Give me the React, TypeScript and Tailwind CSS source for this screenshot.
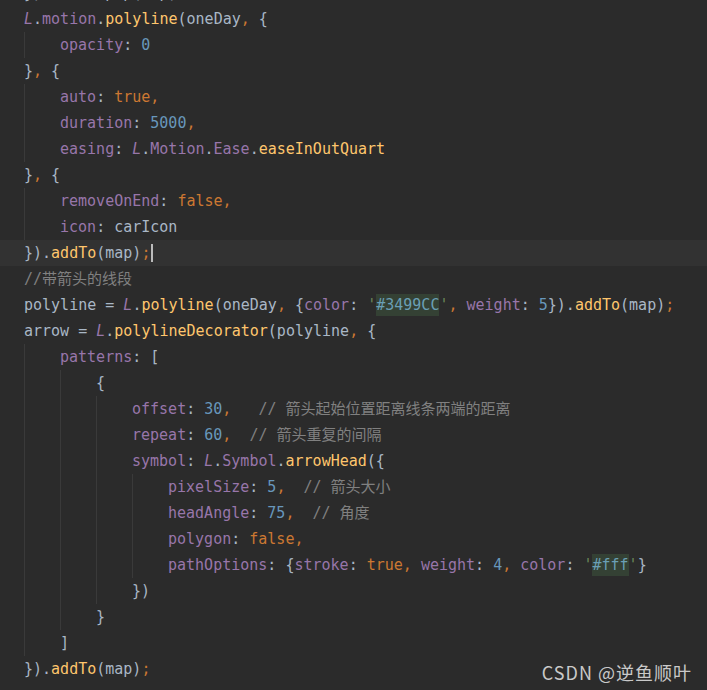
type Tok = { t: string; c: string }
type Line = { indent: number; toks: Tok[]; active?: boolean }

const d = (t: string): Tok => ({ t, c: 'text-[#a9b7c6]' })
const p = (t: string): Tok => ({ t, c: 'text-[#9876aa]' })
const pi = (t: string): Tok => ({ t, c: 'text-[#9876aa] italic' })
const y = (t: string): Tok => ({ t, c: 'text-[#ffc66d]' })
const o = (t: string): Tok => ({ t, c: 'text-[#cc7832]' })
const n = (t: string): Tok => ({ t, c: 'text-[#6897bb]' })
const s = (t: string): Tok => ({ t, c: 'text-[#6a8759]' })
const hl = (t: string): Tok => ({ t, c: 'text-[#6a9fb5] bg-[#344134]' })
const cm = (t: string): Tok => ({ t, c: 'text-[#808080]' })

const lines: Line[] = [
  { indent: 0, toks: [d('}).bindPopup(map);')] },
  { indent: 0, toks: [pi('L'), d('.'), p('motion'), d('.'), y('polyline'), d('(oneDay'), o(','), d(' {')] },
  { indent: 1, toks: [p('opacity'), d(': '), n('0')] },
  { indent: 0, toks: [d('}'), o(','), d(' {')] },
  { indent: 1, toks: [p('auto'), d(': '), o('true,')] },
  { indent: 1, toks: [p('duration'), d(': '), n('5000'), o(',')] },
  { indent: 1, toks: [p('easing'), d(': '), pi('L'), d('.'), p('Motion'), d('.'), p('Ease'), d('.'), y('easeInOutQuart')] },
  { indent: 0, toks: [d('}'), o(','), d(' {')] },
  { indent: 1, toks: [p('removeOnEnd'), d(': '), o('false,')] },
  { indent: 1, toks: [p('icon'), d(': '), d('carIcon')] },
  { indent: 0, toks: [d('}).'), y('addTo'), d('(map)'), o(';')], active: true },
  { indent: 0, toks: [cm('//带箭头的线段')] },
  {
    indent: 0,
    toks: [
      d('polyline = '), pi('L'), d('.'), y('polyline'), d('(oneDay'), o(','), d(' {'), p('color'), d(': '),
      s("'"), hl('#3499CC'), s("'"), o(','), d(' '), p('weight'), d(': '), n('5'), d('}).'), y('addTo'),
      d('(map)'), o(';'),
    ],
  },
  { indent: 0, toks: [d('arrow = '), pi('L'), d('.'), y('polylineDecorator'), d('(polyline'), o(','), d(' {')] },
  { indent: 1, toks: [p('patterns'), d(': [')] },
  { indent: 2, toks: [d('{')] },
  { indent: 3, toks: [p('offset'), d(': '), n('30'), o(','), cm('   // 箭头起始位置距离线条两端的距离')] },
  { indent: 3, toks: [p('repeat'), d(': '), n('60'), o(','), cm('  // 箭头重复的间隔')] },
  { indent: 3, toks: [p('symbol'), d(': '), pi('L'), d('.'), p('Symbol'), d('.'), y('arrowHead'), d('({')] },
  { indent: 4, toks: [p('pixelSize'), d(': '), n('5'), o(','), cm('  // 箭头大小')] },
  { indent: 4, toks: [p('headAngle'), d(': '), n('75'), o(','), cm('  // 角度')] },
  { indent: 4, toks: [p('polygon'), d(': '), o('false,')] },
  {
    indent: 4,
    toks: [
      p('pathOptions'), d(': {'), p('stroke'), d(': '), o('true,'), d(' '), p('weight'), d(': '), n('4'), o(','),
      d(' '), p('color'), d(': '), s("'"), hl('#fff'), s("'"), d('}'),
    ],
  },
  { indent: 3, toks: [d('})')] },
  { indent: 2, toks: [d('}')] },
  { indent: 1, toks: [d(']')] },
  { indent: 0, toks: [d('}).'), y('addTo'), d('(map)'), o(';')] },
]

function CodeLine({ line }: { line: Line }) {
  return (
    <div className={`flex h-[26px] items-stretch pl-[24px] ${line.active ? 'bg-[#323232]' : ''}`}>
      {Array.from({ length: line.indent }).map((_, i) => (
        <span key={i} className="w-[36px] shrink-0 border-l border-[#3a3a3a]" />
      ))}
      <span className="flex items-center whitespace-pre">
        {line.toks.map((tk, i) => (
          <span key={i} className={tk.c}>
            {tk.t}
          </span>
        ))}
        {line.active && <span className="ml-px inline-block h-[18px] w-[2px] bg-[#bbbbbb]" />}
      </span>
    </div>
  )
}

export default function App() {
  return (
    <div className="relative h-[690px] w-[707px] overflow-hidden bg-[#2b2b2b] font-['DejaVu_Sans_Mono','Noto_Sans_CJK_SC',monospace] text-[15px]">
      <div className="-mt-[20px] flex flex-col">
        {lines.map((line, i) => (
          <CodeLine key={i} line={line} />
        ))}
      </div>
      <div className="absolute bottom-[9px] right-[15px] font-['Noto_Sans_CJK_SC','Noto_Sans',sans-serif] text-[18px] leading-none tracking-[1px] text-[#c9c9c9]">
        CSDN @逆鱼顺叶
      </div>
    </div>
  )
}
